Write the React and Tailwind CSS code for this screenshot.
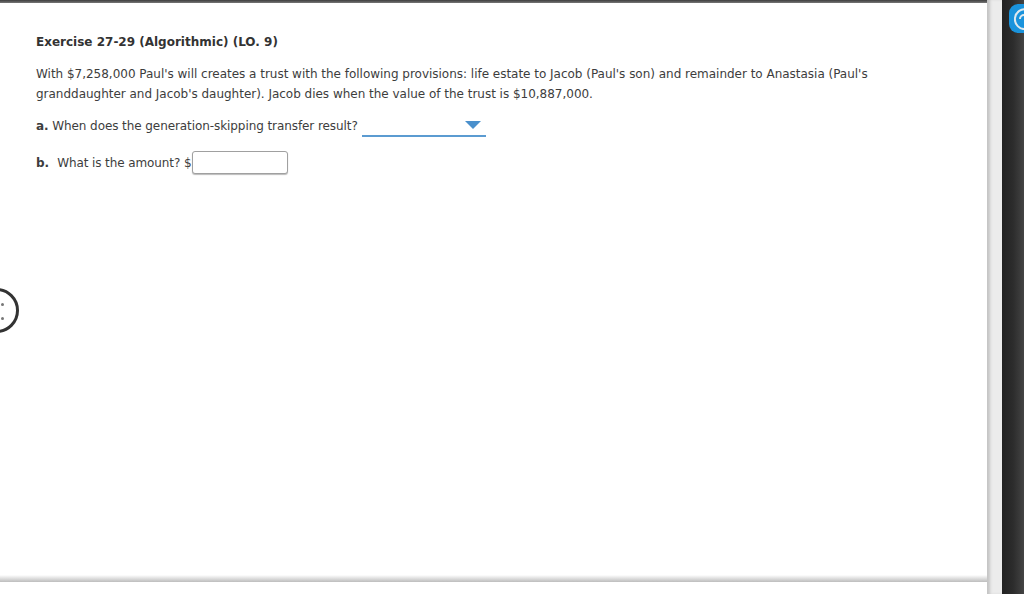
export default function App() {
    return (
        <div className="relative flex h-[594px] w-[1024px] overflow-hidden bg-white font-['DejaVu_Sans',sans-serif] text-[12px] text-[#3d3d3d]">
            <div className="flex w-[987px] flex-col">
                <div className="h-[3px] w-[992px] bg-gradient-to-b from-[#3f3f3f] to-[#777]"></div>
                <div className="flex-1 pl-9 pr-[100px] pt-[31px]">
                    <h2 className="text-[12px] font-bold leading-[16px] text-[#333]">Exercise 27-29 (Algorithmic) (LO. 9)</h2>
                    <p className="mt-[14px] w-[850px] leading-[20px] tracking-[-0.018px]">
                        With $7,258,000 Paul's will creates a trust with the following provisions: life estate to Jacob (Paul's son) and remainder to Anastasia (Paul's granddaughter and Jacob's daughter). Jacob dies when the value of the trust is $10,887,000.
                    </p>
                    <div className="mt-[11px] flex h-[22px] items-center">
                        <span className="tracking-[-0.08px]"><b>a.</b> When does the generation-skipping transfer result?</span>
                        <div className="ml-[4px] flex h-[22px] w-[124px] items-center justify-end border-b-2 border-[#5b9bd1] pr-[5px]">
                            <svg width="16" height="8" viewBox="0 0 16 8">
                                <path d="M0 0H16L8 8Z" fill="#4a90cc" />
                            </svg>
                        </div>
                    </div>
                    <div className="mt-[14px] flex items-center">
                        <b>b.</b>
                        <span className="ml-[8px] tracking-[-0.1px]">What is the amount? $</span>
                        <input className="ml-[1px] h-[23px] w-[96px] rounded-[3px] border border-[#a0a0a0] bg-white shadow-[0_1px_1px_#bbb]" />
                    </div>
                </div>
                <div className="mb-[12px] h-[7px] bg-gradient-to-b from-white to-[#bdbdbd]"></div>
            </div>
            <div className="w-[15px] bg-[#ececec] shadow-[inset_4px_0_3px_-1px_#c4c4c4]"></div>
            <div className="flex-1 bg-gradient-to-r from-[#222] via-[#2c2c2c] to-[#444]"></div>

            {/* round button cut off by the left edge */}
            <div className="absolute left-[-26px] top-[288px] h-[45px] w-[45px] rounded-full border-[3px] border-[#333] bg-white">
                <div className="absolute left-[24px] top-[12px] h-[3px] w-[3px] rounded-full bg-[#777]"></div>
                <div className="absolute left-[24px] top-[26px] h-[3px] w-[3px] rounded-full bg-[#777]"></div>
            </div>

            {/* help badge on the dark bar */}
            <div className="absolute left-[1009px] top-[4px] h-[29px] w-[30px] rounded-[9px] bg-[#1a93dc]">
                <svg className="absolute left-[5px] top-[4px]" width="22" height="22" viewBox="0 0 22 22" fill="none">
                    <path d="M19 17A10 10 0 1 1 20 7" stroke="#dfe9ee" strokeWidth="2" />
                    <path d="M6 11A4 4 0 0 1 10 7" stroke="#dfe9ee" strokeWidth="2" />
                </svg>
            </div>
        </div>
    )
}
